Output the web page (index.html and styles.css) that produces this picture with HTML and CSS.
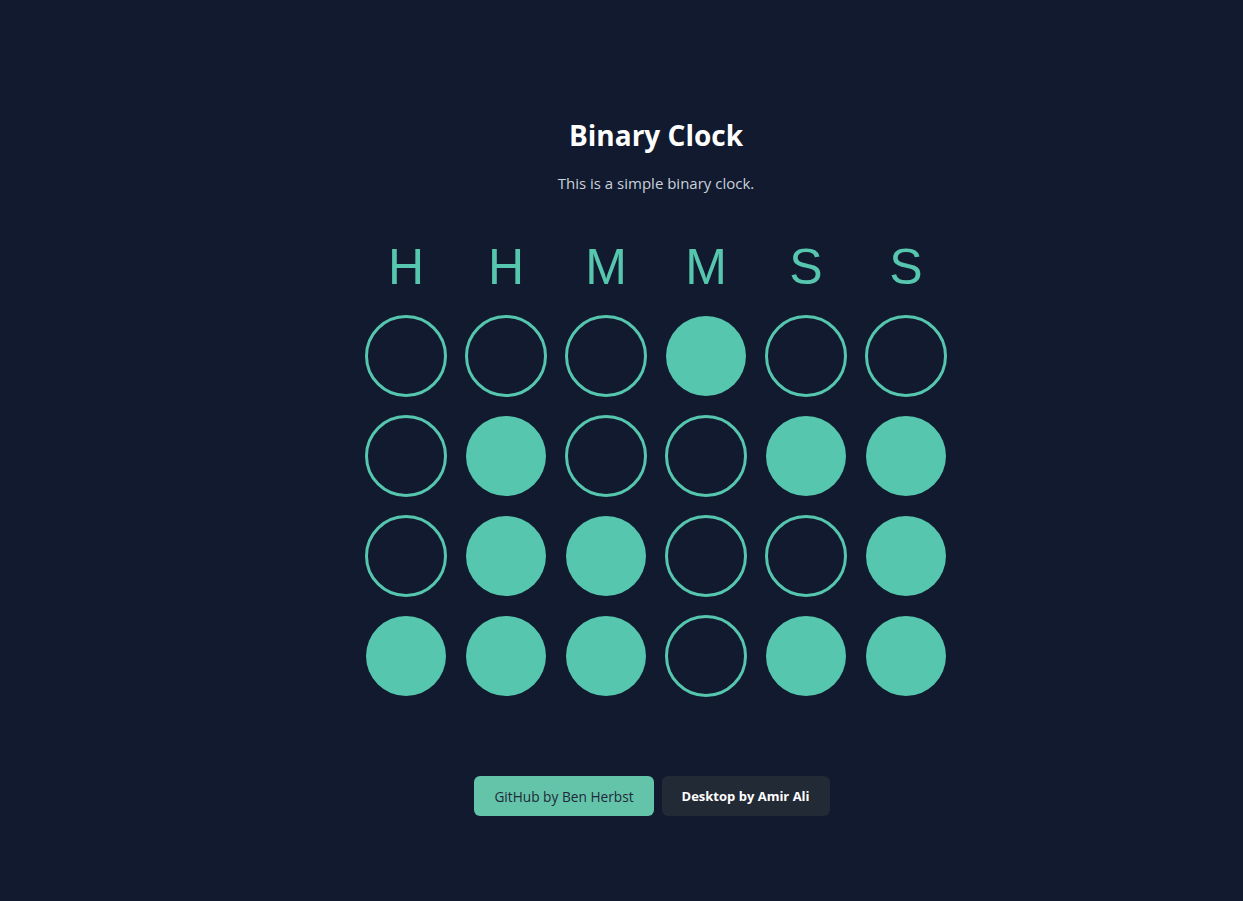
FILE: index.html
```html
<!DOCTYPE html>
<html>
<head>
<meta charset="utf-8">
<link rel="stylesheet" href="styles.css">
</head>
<body>
<main class="page">
  <h1 class="title">Binary Clock</h1>
  <p class="subtitle">This is a simple binary clock.</p>
  <div class="clock">
    <div class="col"><div class="label">H</div><div class="dot"></div><div class="dot"></div><div class="dot"></div><div class="dot on"></div></div>
    <div class="col"><div class="label">H</div><div class="dot"></div><div class="dot on"></div><div class="dot on"></div><div class="dot on"></div></div>
    <div class="col"><div class="label">M</div><div class="dot"></div><div class="dot"></div><div class="dot on"></div><div class="dot on"></div></div>
    <div class="col"><div class="label">M</div><div class="dot on"></div><div class="dot"></div><div class="dot"></div><div class="dot"></div></div>
    <div class="col"><div class="label">S</div><div class="dot"></div><div class="dot on"></div><div class="dot"></div><div class="dot on"></div></div>
    <div class="col"><div class="label">S</div><div class="dot"></div><div class="dot on"></div><div class="dot on"></div><div class="dot on"></div></div>
  </div>
  <div class="links">
    <a class="btn btn-primary" href="#">GitHub by Ben Herbst</a>
    <a class="btn btn-dark" href="#">Desktop by Amir Ali</a>
  </div>
</main>
</body>
</html>
```

FILE: styles.css
```css
html, body {
  margin: 0;
  padding: 0;
  background: #111a2e;
  height: 100%;
}
.page {
  display: flex;
  flex-direction: column;
  align-items: center;
  padding-left: 69px;
  padding-top: 116px;
  font-family: "Open Sans", "Noto Sans", sans-serif;
}
.title {
  margin: 0;
  color: #ffffff;
  font-size: 28px;
  font-weight: 700;
  line-height: 38px;
}
.subtitle {
  margin: 18px 0 0 0;
  color: #c9d1de;
  font-size: 15px;
  line-height: 22px;
}
.clock {
  display: flex;
  gap: 20px;
  margin-top: 49px;
}
.col {
  display: flex;
  flex-direction: column;
  align-items: center;
  gap: 20px;
  width: 80px;
}
.label {
  font-family: "Liberation Sans", Arial, sans-serif;
  font-size: 50px;
  line-height: 48px;
  color: #56c6ae;
  height: 48px;
  margin-bottom: 5px;
}
.dot {
  width: 82px;
  height: 82px;
  margin: -1px 0;
  box-sizing: border-box;
  border-radius: 50%;
  border: 3px solid #56c6ae;
  flex: none;
}
.dot.on {
  width: 80px;
  height: 80px;
  margin: 0;
  background: #56c6ae;
  border: none;
}
.links {
  display: flex;
  gap: 8px;
  margin-top: 80px;
  margin-left: -8px;
}
.btn {
  display: flex;
  align-items: center;
  height: 40px;
  padding: 0 20px;
  border-radius: 6px;
  font-size: 13px;
  text-decoration: none;
}
.btn-primary {
  background: #64c4aa;
  color: #1f2937;
  font-size: 13.7px;
}
.btn-dark {
  background: #222a36;
  color: #ffffff;
  font-weight: 700;
}
```
